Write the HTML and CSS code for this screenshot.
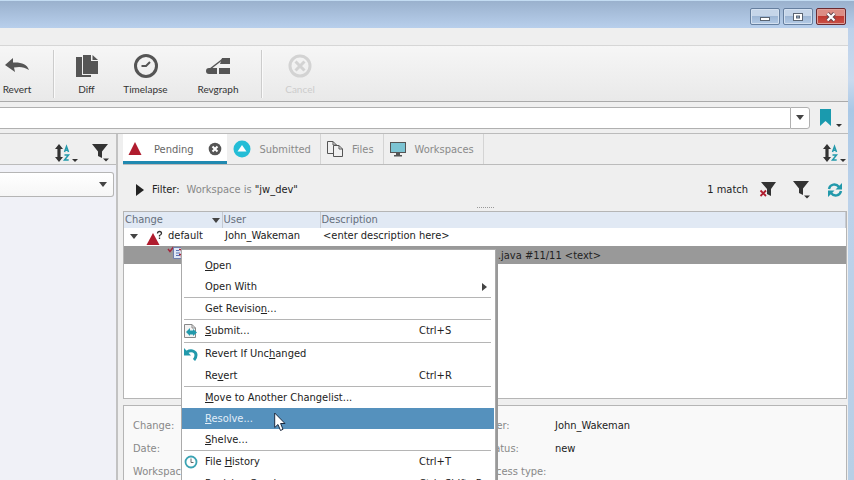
FILE: index.html
```html
<!DOCTYPE html>
<html lang="en">
<head>
  <meta charset="UTF-8">
  <meta name="viewport" content="width=device-width, initial-scale=1.0">
  <title>Pending Changelists</title>
  <link rel="stylesheet" href="styles.css">
</head>
<body>
  <!-- shared icons -->
  <svg class="defs" width="0" height="0" aria-hidden="true">
    <symbol id="sort" viewBox="0 0 24 20">
      <path d="M5 1 9 6H6.600V14H9L5 19 1 14H3.400V6H1z" fill="#333"/>
      <path d="M10.500 9 12.500 3.500 14.500 9M11.300 7.200h2.500M10.500 12h4l-4 5h4.200" fill="none" stroke="#2299ab" stroke-width="1.500"/>
      <path d="M18 16h6l-3 3z" fill="#333"/>
    </symbol>
    <symbol id="funnel" viewBox="0 0 18 18">
      <path d="M0 0H16L10 7.500V14L6 12V7.500z" fill="#333"/>
      <path d="M11 14.500h6l-3 3z" fill="#333"/>
    </symbol>
  </svg>

  <header class="titlebar">
    <button class="win-btn" aria-label="Minimize">
      <svg width="12" height="10" viewBox="0 0 12 10"><rect x="1.500" y="5.500" width="9" height="3" fill="#fff" stroke="#5a6472"/></svg>
    </button>
    <button class="win-btn" aria-label="Maximize">
      <svg width="12" height="10" viewBox="0 0 12 10"><rect x="1.500" y="1.500" width="9" height="7" fill="#fff" stroke="#5a6472"/><rect x="4.500" y="4" width="3" height="2" fill="#9db5d4" stroke="#5a6472"/></svg>
    </button>
    <button class="win-btn close" aria-label="Close">
      <svg width="12" height="10" viewBox="0 0 12 10"><path d="M2.500 1.500 9.500 8.500M9.500 1.500 2.500 8.500" stroke="#63454c" stroke-width="4"/><path d="M2.500 1.500 9.500 8.500M9.500 1.500 2.500 8.500" stroke="#fff" stroke-width="2.200"/></svg>
    </button>
  </header>

  <div class="window">
    <div class="menubar"></div>

    <nav class="toolbar">
      <button class="tool first">
        <svg width="26" height="26" viewBox="0 0 26 26"><path d="M1 12 9 5V9.500C17 9 23 11 25 17 20 13.500 15 13.500 10 14.500L11 19z" fill="#555"/></svg>
        Revert
      </button>
      <span class="sep"></span>
      <button class="tool diff">
        <svg width="26" height="26" viewBox="0 0 26 26"><path d="M2 4h6v18h9v2H2z" fill="#555"/><path d="M9 2h8v6h7v13H9z" fill="#555"/><path d="M18.500 2 24 7h-5.500z" fill="#555"/></svg>
        Diff
      </button>
      <button class="tool">
        <svg width="26" height="26" viewBox="0 0 26 26"><circle cx="13" cy="13" r="10.500" fill="none" stroke="#555" stroke-width="3"/><path d="M8.500 13H13L17 9" fill="none" stroke="#555" stroke-width="2"/></svg>
        Timelapse
      </button>
      <button class="tool wide">
        <svg width="26" height="26" viewBox="0 0 26 26"><path d="M5 16 18 6" stroke="#555" stroke-width="1.500"/><path d="M17 5h8v6H15zM14 15h11v6H14zM4 15h8v6H4q-3 0-3-3t3-3z" fill="#555"/></svg>
        Revgraph
      </button>
      <span class="sep"></span>
      <button class="tool cancel" disabled>
        <svg width="26" height="26" viewBox="0 0 26 26"><circle cx="13" cy="13" r="10" fill="none" stroke="#d3d3d3" stroke-width="3"/><path d="M8.500 8.500 17.500 17.500M17.500 8.500 8.500 17.500" stroke="#d3d3d3" stroke-width="3"/></svg>
        Cancel
      </button>
    </nav>

    <div class="address">
      <input type="text" aria-label="Address">
      <button class="drop" aria-label="Show history"><span class="arrow"></span></button>
      <button class="bookmark" aria-label="Bookmarks">
        <svg width="24" height="20" viewBox="0 0 24 20"><path d="M1 1h11v17l-5.500-5L1 18z" fill="#1a9aae"/><path d="M17 16h6l-3 3z" fill="#333"/></svg>
      </button>
    </div>

    <main class="panes">
      <aside class="left">
        <div class="left-tools">
          <button aria-label="Sort"><svg width="24" height="20"><use href="#sort"/></svg></button>
          <button aria-label="Filter"><svg width="18" height="18"><use href="#funnel"/></svg></button>
        </div>
        <div class="picker">
          <select aria-label="Workspace"><option></option></select>
          <span class="arrow"></span>
        </div>
      </aside>

      <section class="right">
        <div class="tabs">
          <button class="tab active">
            <svg width="14" height="14" viewBox="0 0 14 14"><path d="M7 0 13.500 13H.5z" fill="#b01c2e"/></svg>
            <span class="pending">Pending</span>
            <svg width="14" height="14" viewBox="0 0 14 14"><circle cx="7" cy="7" r="6.300" fill="#555"/><path d="M4.500 4.500l5 5M9.500 4.500l-5 5" stroke="#fff" stroke-width="2"/></svg>
          </button>
          <button class="tab">
            <svg width="18" height="18" viewBox="0 0 18 18"><circle cx="9" cy="9" r="8.500" fill="#24bdd6"/><path d="M9 5 13.500 11.500h-9z" fill="#fff"/></svg>
            <span>Submitted</span>
          </button>
          <button class="tab">
            <svg width="16" height="18" viewBox="0 0 16 18"><g fill="#f0f0f0" stroke="#555"><path d="M.5 1.500H6L9.500 5V13.500H.5z"/><path d="M6 1.500V5H9.500" fill="none"/><path d="M6.500 5.500H12L15.500 9V16.500H6.500z"/><path d="M12 5.500V9H15.500" fill="none"/></g></svg>
            <span>Files</span>
          </button>
          <button class="tab">
            <svg width="16" height="16" viewBox="0 0 16 16"><rect x=".5" y="1.500" width="15" height="10" fill="#7cc4d3" stroke="#555"/><path d="M6 12h4v2h2v1.500H4V14h2z" fill="#555"/></svg>
            <span>Workspaces</span>
          </button>
          <button class="tab-sort" aria-label="Sort"><svg width="24" height="20"><use href="#sort"/></svg></button>
        </div>

        <div class="filter">
          <svg width="8" height="12" viewBox="0 0 8 12"><path d="M0 0 8 6 0 12z" fill="#222"/></svg>
          <span>Filter:</span>
          <span class="query">Workspace is <b>"jw_dev"</b></span>
          <span class="match">1 match</span>
          <button aria-label="Clear filter">
            <svg width="18" height="18" viewBox="0 0 18 18"><path d="M2 1H17L12 8V15L8 13V8z" fill="#333"/><path d="M1.500 9.500 7 15M7 9.500 1.500 15" stroke="#b01c2e" stroke-width="1.800"/></svg>
          </button>
          <button aria-label="Filter"><svg width="18" height="18"><use href="#funnel"/></svg></button>
          <button aria-label="Refresh">
            <svg width="16" height="16" viewBox="0 0 16 16"><path d="M2 7C3 2 9 1 12 5M14 9C13 14 7 15 4 11" fill="none" stroke="#2299ab" stroke-width="2.400"/><path d="M15 1V7.500H8.500zM1 15V8.500H7.500z" fill="#2299ab"/></svg>
          </button>
        </div>
        <div class="grip"></div>

        <div class="list">
          <table>
            <colgroup><col class="c-change"><col class="c-user"><col></colgroup>
            <thead>
              <tr><th><div class="sorted">Change <span class="arrow"></span></div></th><th>User</th><th>Description</th></tr>
            </thead>
            <tbody>
              <tr>
                <td>
                  <div class="change">
                    <span class="arrow"></span>
                    <svg width="18" height="16" viewBox="0 0 18 16"><path d="M7 3 13.500 15H.5z" fill="#b01c2e"/><path d="M11.500 3.500Q11.500 1.500 13.500 1.500T15.500 3.500Q15.500 4.500 13.500 5.500V6.500M13.500 7.500V9" fill="none" stroke="#333" stroke-width="1.300"/></svg>
                    default
                  </div>
                </td>
                <td>John_Wakeman</td>
                <td>&lt;enter description here&gt;</td>
              </tr>
              <tr class="selected">
                <td colspan="2">
                  <svg width="20" height="16" viewBox="0 0 20 16"><path d="M1 3 3 5.500 6.500 1" fill="none" stroke="#a3263c" stroke-width="1.500"/><path d="M6.500 1.500H17V12.500H6.500z" fill="#dfe8f6" stroke="#6d7fae"/><path d="M9 4.500h3M9 7h4M9 9.500h4" stroke="#5874b4"/><path d="M12 3.500h2.500v2M12 8.500h2.500v3" fill="none" stroke="#a3263c" stroke-width="1.500"/></svg>
                </td>
                <td><span class="file">t.java #11/11 &lt;text&gt;</span></td>
              </tr>
            </tbody>
          </table>
        </div>

        <dl class="details">
          <dt>Change:</dt><dd></dd><dt>User:</dt><dd>John_Wakeman</dd>
          <dt>Date:</dt><dd></dd><dt>Status:</dt><dd>new</dd>
          <dt>Workspace:</dt><dd></dd><dt>Access type:</dt><dd></dd>
        </dl>
      </section>
    </main>
  </div>

  <div class="context-menu" role="menu">
    <button role="menuitem"><span><u>O</u>pen</span></button>
    <button role="menuitem"><span>Open With</span><i class="sub"></i></button>
    <hr>
    <button role="menuitem"><span>Get Revisio<u>n</u>...</span></button>
    <hr>
    <button role="menuitem" class="has-icon">
      <svg width="14" height="16" viewBox="0 0 14 16"><path d="M.5 1.500H8L11.500 5V14.500H.5z" fill="#f3f3f3" stroke="#888"/><path d="M8 1.500V5h3.500" fill="none" stroke="#888"/><path d="M2 9 6 5V7.500H9V6L13 9.500 9 13V11.500H6V13z" fill="#2299ab"/></svg>
      <span><u>S</u>ubmit...</span><kbd>Ctrl+S</kbd>
    </button>
    <hr>
    <button role="menuitem" class="has-icon">
      <svg width="14" height="14" viewBox="0 0 14 14"><path d="M3 5C8 2 12 5 12 8Q12 11 10 13" fill="none" stroke="#2299ab" stroke-width="3"/><path d="M0 1V8.500H7z" fill="#2299ab"/></svg>
      <span>Revert If Unc<u>h</u>anged</span>
    </button>
    <button role="menuitem"><span>Re<u>v</u>ert</span><kbd>Ctrl+R</kbd></button>
    <hr>
    <button role="menuitem"><span><u>M</u>ove to Another Changelist...</span></button>
    <button role="menuitem" class="hover"><span><u>R</u>esolve...</span></button>
    <button role="menuitem"><span><u>S</u>helve...</span></button>
    <hr>
    <button role="menuitem" class="has-icon">
      <svg width="14" height="14" viewBox="0 0 14 14"><circle cx="7" cy="7" r="5.500" fill="#fff" stroke="#3ba3b3" stroke-width="1.800"/><path d="M7 3.500V7.500H9.500" fill="none" stroke="#666"/></svg>
      <span>File <u>H</u>istory</span><kbd>Ctrl+T</kbd>
    </button>
    <button role="menuitem"><span>Revision Graph</span><kbd>Ctrl+Shift+R</kbd></button>
  </div>

  <svg class="cursor" width="12" height="20" viewBox="0 0 12 20"><path d="M.7 1V15.500L4 12.500 6.500 18.500 9 17.300 6.600 11.500H11z" fill="#fff" stroke="#1c2b40"/></svg>
</body>
</html>
```
FILE: styles.css
```css
* {
  box-sizing: border-box;
}

body {
  margin: 0;
  height: 100vh;
  display: flex;
  flex-direction: column;
  position: relative;
  overflow: hidden;
  background: linear-gradient(#b5cce8, #c9daee 80px, #a9c8e6 110px, #bcd2ea 200px, #b8cfe6);
  color: #222;
  font-family: "DejaVu Sans Condensed", "Noto Sans", sans-serif;
  font-size: 11px;
  line-height: 16px;
}

button {
  padding: 0;
  border: 0;
  background: none;
  color: inherit;
  font: inherit;
}

svg {
  display: block;
  flex: none;
}

.defs {
  position: absolute;
}

.arrow {
  flex: none;
  border: 4px solid transparent;
  border-top: 5px solid #444;
  border-bottom: 0;
}

/* Title bar */
.titlebar {
  height: 28px;
  flex: none;
  display: flex;
  justify-content: flex-end;
  gap: 3px;
  padding: 7px 8px 0 0;
  border-top: 1px solid #c3dcf2;
  background: linear-gradient(#9ab1cd, #b8cfec);
}

.win-btn {
  width: 30px;
  height: 17px;
  display: flex;
  align-items: center;
  justify-content: center;
  border: 1px solid #667f9f;
  border-radius: 2px;
  background: linear-gradient(#c5d5e9 45%, #9db6d5 50%, #b4cbe6);
  box-shadow: inset 0 0 0 1px #d3e0f0;
}

.win-btn.close {
  border-color: #6b2a30;
  background: linear-gradient(#dc8d84 45%, #c03930 50%, #ca5148);
  box-shadow: inset 0 0 0 1px #dea09a;
}

.window {
  flex: 1;
  min-height: 0;
  display: flex;
  flex-direction: column;
  margin-right: 6px;
  background: #efefef;
}

.menubar {
  height: 18px;
  flex: none;
  border-bottom: 1px solid #d6d6d6;
}

/* Toolbar */
.toolbar {
  height: 56px;
  flex: none;
  display: flex;
  align-items: center;
  border-bottom: 1px solid #aaa;
  background: linear-gradient(#f6f6f6, #e9e9e9);
  font-family: Lato, sans-serif;
  font-size: 10px;
}

.tool {
  width: 59px;
  display: flex;
  flex-direction: column;
  align-items: center;
  gap: 2px;
  padding-top: 2px;
  color: #333;
}

.tool.first {
  width: 34px;
  margin-right: 19px;
}

.tool.diff {
  margin-left: 2px;
}

.tool.wide {
  width: 86px;
}

.tool.cancel {
  width: 74px;
  color: #ccc;
}

.sep {
  width: 2px;
  height: 48px;
  border-left: 1px solid #ccc;
  background: #fafafa;
}

/* Address bar */
.address {
  height: 32px;
  flex: none;
  display: flex;
  align-items: center;
  padding-right: 5px;
  border-bottom: 1px solid #bbb;
}

.address input {
  flex: 1;
  min-width: 0;
  height: 22px;
  border: 1px solid #b0b0b0;
  border-width: 1px 0;
  background: #fff;
  font: inherit;
}

.drop {
  width: 20px;
  height: 22px;
  display: flex;
  align-items: center;
  justify-content: center;
  border: 1px solid #b0b0b0;
  border-radius: 0 3px 3px 0;
  background: #fff;
}

.bookmark {
  margin-left: 9px;
}

/* Panes */
.panes {
  flex: 1;
  min-height: 0;
  display: flex;
}

.left {
  width: 118px;
  flex: none;
  border-right: 2px solid #c2c2c2;
  background: #f0f1f7;
}

.left-tools {
  height: 31px;
  display: flex;
  align-items: center;
  justify-content: flex-end;
  gap: 14px;
  padding: 8px 6px 0 0;
  border-bottom: 1px solid #bbb;
  background: #efefef;
}

.picker {
  position: relative;
  margin: 7px 2px 0 0;
}

.picker select {
  display: block;
  width: 100%;
  height: 25px;
  appearance: none;
  border: 1px solid #b5b5b5;
  border-left: 0;
  border-radius: 0 3px 3px 0;
  background: linear-gradient(#fff, #f6f6f6);
}

.picker .arrow {
  position: absolute;
  right: 7px;
  top: 10px;
}

.right {
  flex: 1;
  min-width: 0;
  display: flex;
  flex-direction: column;
  padding: 0 1px 0 5px;
}

.tabs {
  height: 31px;
  flex: none;
  display: flex;
  border-bottom: 1px solid #bbb;
}

.tab {
  display: flex;
  align-items: center;
  gap: 9px;
  padding: 0 9px 0 6px;
  border-right: 1px solid #d4d4d4;
  color: #8a8a8a;
}

.tab span {
  padding-top: 2px;
}

.tab.active {
  padding: 3px 5px 0 5px;
  gap: 12px;
  border-right: 0;
  border-bottom: 3px solid #2089b0;
  background: #fff;
  color: #666;
}

.tab .pending {
  margin-right: 2px;
}

.tab-sort {
  margin: 8px 1px 0 auto;
}

.filter {
  height: 42px;
  flex: none;
  display: flex;
  align-items: center;
  gap: 7px;
  padding: 7px 4px 0 13px;
}

.filter > svg {
  margin-right: 1px;
}

.query {
  color: #888;
}

.query b {
  color: #222;
  font-weight: normal;
}

.match {
  margin-left: auto;
}

.filter button {
  margin-left: 4px;
}

.filter button + button {
  margin-left: 9px;
}

.grip {
  width: 17px;
  height: 4px;
  flex: none;
  align-self: center;
  border-top: 1px dotted #999;
}

/* Changelists */
.list {
  flex: 1;
  min-height: 0;
  margin-bottom: 6px;
  overflow: hidden;
  border: 1px solid #b5b5b5;
  background: #fff;
}

table {
  width: 100%;
  table-layout: fixed;
  border-collapse: collapse;
}

.c-change,
.c-user {
  width: 98px;
}

th {
  height: 16px;
  padding: 0 2px 0 1px;
  border-right: 1px solid #c5cad2;
  background: #e1e9f4;
  color: #666f7c;
  font-weight: normal;
  line-height: 16px;
  text-align: left;
}

.sorted {
  display: flex;
  align-items: center;
  justify-content: space-between;
}

td {
  height: 18px;
  padding: 0 0 2px 3px;
  line-height: 16px;
}

.change {
  display: flex;
  align-items: center;
  gap: 6px;
  padding-left: 3px;
}

.change svg {
  margin: 2px -2px -2px 2px;
}

.selected {
  background: #999;
}

.selected td {
  padding: 2px 0 0 3px;
}

.selected svg {
  margin: -2px 0 2px 40px;
}

.file {
  margin-left: 171px;
}

/* Changelist details */
.details {
  flex: none;
  display: grid;
  grid-template-columns: 72px 279px 71px 1fr;
  row-gap: 7px;
  margin: 0;
  padding: 12px 0 0 9px;
  border: 1px solid #b5b5b5;
  border-bottom: 0;
  background: #f9f9f9;
}

.details dt {
  color: #888;
}

.details dd {
  margin: 0;
}

/* Context menu */
.context-menu {
  position: absolute;
  left: 181px;
  top: 249px;
  width: 315px;
  padding: 5px 1px 0 0;
  border: 1px solid #aaa;
  background: #fff;
  box-shadow: 1px -1px 0 1px #999;
}

.context-menu button {
  display: flex;
  align-items: center;
  position: relative;
  width: 100%;
  height: 21px;
  padding-left: 23px;
  text-align: left;
}

.context-menu button.has-icon {
  height: 22px;
  padding-left: 2px;
}

.has-icon svg {
  width: 14px;
  margin-right: 7px;
}

.context-menu span {
  flex: 1;
}

.context-menu kbd {
  width: 75px;
  font: inherit;
}

.context-menu hr {
  height: 1px;
  margin: 0 3px 0 2px;
  border: 0;
  background: #b5b5b5;
}

.context-menu .hover {
  background: #5591bd;
  color: #e2eef8;
}

.sub {
  margin-right: 7px;
  border: 4px solid transparent;
  border-left: 5px solid #444;
  border-right: 0;
}

.cursor {
  position: absolute;
  left: 274px;
  top: 412px;
}
```
